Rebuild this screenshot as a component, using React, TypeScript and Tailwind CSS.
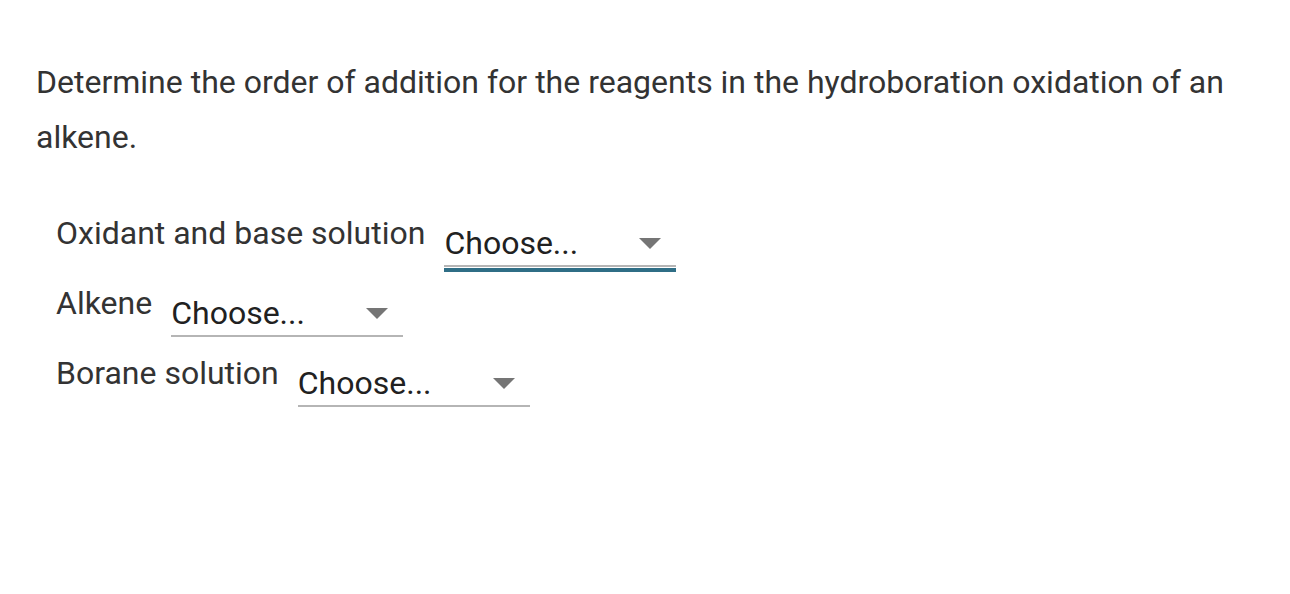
import React from "react";

function Caret() {
  return (
    <svg width="22" height="11" viewBox="0 0 22 11" className="shrink-0">
      <path d="M0 0 H22 L11 11 Z" fill="#757575" />
    </svg>
  );
}

function SelectBox({ focused }: { focused?: boolean }) {
  return (
    <div className="flex flex-col w-[232px] mt-[10px]">
      <div className="flex items-center justify-between pr-[15px] h-[44px]">
        <span className="text-[32px] text-[#212121] leading-[44px]">Choose...</span>
        <Caret />
      </div>
      <div className="h-[2px] bg-[#b5b5b5]" />
      {focused ? <div className="h-[4px] mt-[1px] bg-[#2f6e86]" /> : null}
    </div>
  );
}

function Row({ label, focused }: { label: string; focused?: boolean }) {
  return (
    <div className="flex items-start gap-[19px] h-[70px]">
      <span className="text-[32px] text-[#333333] leading-[44px]">{label}</span>
      <SelectBox focused={focused} />
    </div>
  );
}

export default function App() {
  return (
    <div
      className="w-[1290px] h-[594px] bg-white"
      style={{ fontFamily: "Roboto, 'Liberation Sans', sans-serif" }}
    >
      <div className="pl-[36px] pt-[55px]">
        <p className="text-[32px] leading-[55px] text-[#333333] w-[1220px]">
          Determine the order of addition for the reagents in the hydroboration oxidation of an alkene.
        </p>
        <div className="pl-[20px] pt-[46px] flex flex-col">
          <Row label="Oxidant and base solution" focused />
          <Row label="Alkene" />
          <Row label="Borane solution" />
        </div>
      </div>
    </div>
  );
}
